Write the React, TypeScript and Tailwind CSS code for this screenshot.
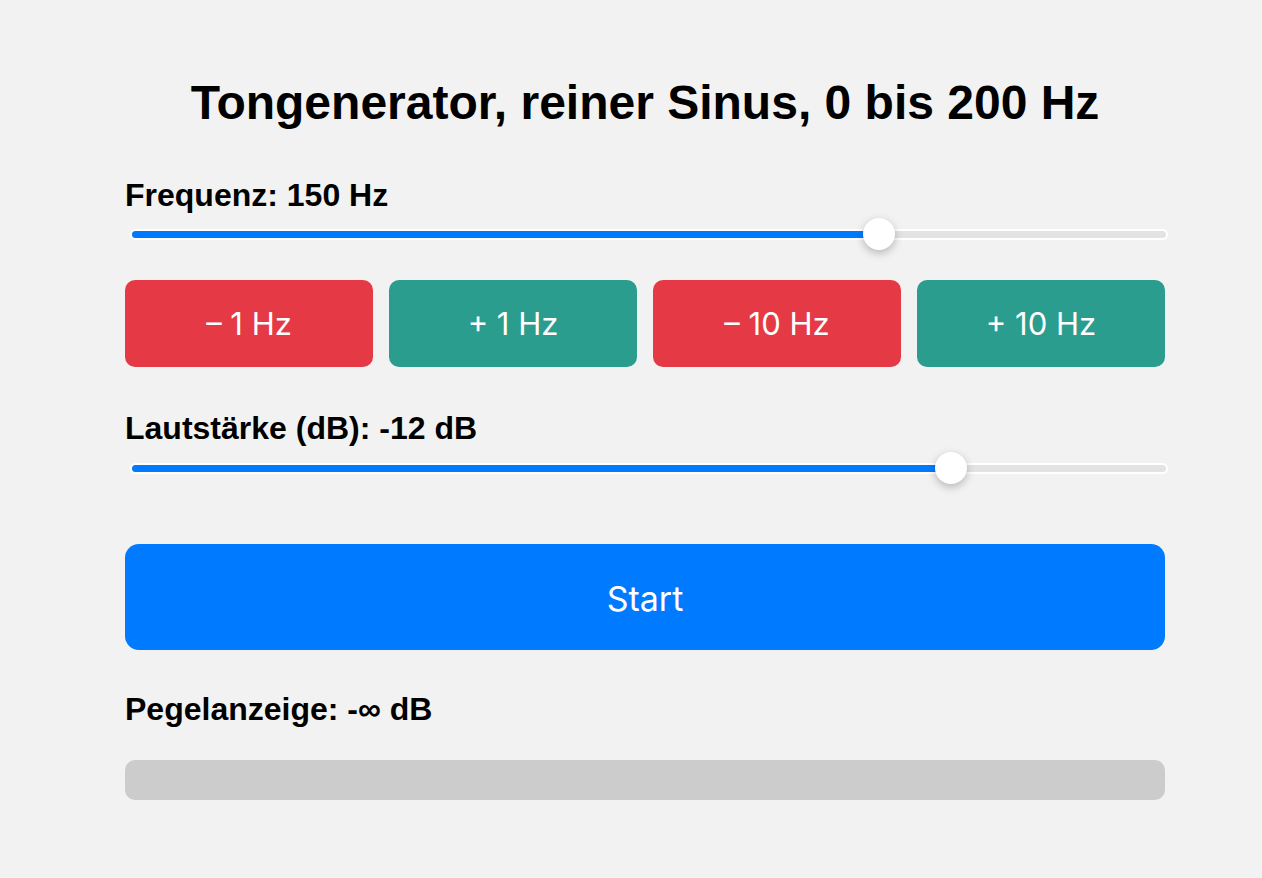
import React from 'react';

const label = "font-['Liberation_Sans',Arial,sans-serif] font-bold text-[32px] leading-none text-black";
const btnFont = "font-['Inter','Noto_Sans',sans-serif]";

const Slider: React.FC<{ pct: number }> = ({ pct }) => {
  // thumb travels inside the track, like a native range input
  const trackW = 1038;
  const thumb = 32;
  const center = thumb / 2 + pct * (trackW - thumb);
  return (
    <div className="relative h-8 ml-[5px] w-[1038px] flex items-center">
      <div className="w-full h-[11px] rounded-full bg-white p-[2px]">
        <div className="relative w-full h-full rounded-full bg-[#e3e3e5] overflow-hidden">
          <div className="h-full bg-[#007bff]" style={{ width: center }} />
        </div>
      </div>
      <div
        className="absolute top-0 h-8 w-8 rounded-full bg-white shadow-[0_3px_8px_rgba(0,0,0,0.25)]"
        style={{ left: center - thumb / 2 }}
      />
    </div>
  );
};

const steps = [
  { text: '– 1 Hz', bg: 'bg-[#e63946]' },
  { text: '+ 1 Hz', bg: 'bg-[#2a9d8f]' },
  { text: '– 10 Hz', bg: 'bg-[#e63946]' },
  { text: '+ 10 Hz', bg: 'bg-[#2a9d8f]' },
];

const App: React.FC = () => {
  const freqPct = 0.7286;
  const volume = -12;
  const volPct = (volume + 60) / 60;

  return (
    <div className="min-h-[878px] bg-[#f2f2f2] pt-[79px]">
      <div className="ml-[125px] w-[1040px] flex flex-col">
        <h1 className="font-['Liberation_Sans',Arial,sans-serif] font-bold text-[48px] leading-none text-black text-center">
          Tongenerator, reiner Sinus, 0 bis 200 Hz
        </h1>

        <div className={`${label} mt-[52px]`}>Frequenz: 150 Hz</div>
        <div className="mt-[7px]">
          <Slider pct={freqPct} />
        </div>

        <div className="mt-[30px] grid grid-cols-4 gap-4">
          {steps.map((s) => (
            <button
              key={s.text}
              className={`${s.bg} ${btnFont} h-[87px] rounded-[10px] text-white text-[31px] font-normal pt-[2px]`}
            >
              {s.text}
            </button>
          ))}
        </div>

        <div className={`${label} mt-[45px]`}>Lautstärke (dB): -12 dB</div>
        <div className="mt-[8px]">
          <Slider pct={volPct} />
        </div>

        <button className={`${btnFont} mt-[60px] h-[106px] rounded-[14px] bg-[#007bff] text-white text-[34px] font-normal pt-[2px]`}>
          Start
        </button>

        <div className={`${label} mt-[43px]`}>Pegelanzeige: -∞ dB</div>
        <div className="mt-[35px] h-10 rounded-[10px] bg-[#cccccc]" />
      </div>
    </div>
  );
};

export default App;
